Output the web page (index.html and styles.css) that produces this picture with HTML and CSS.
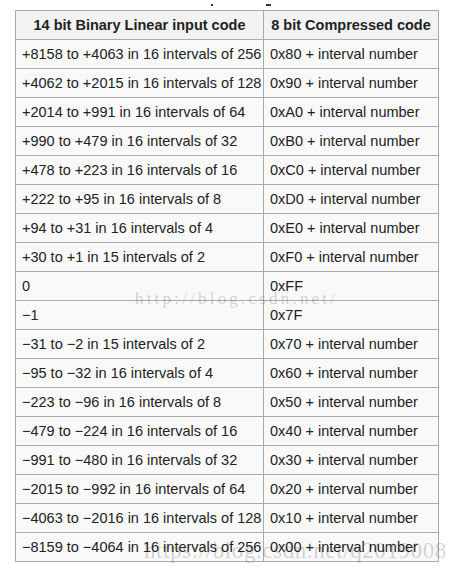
FILE: index.html
```html
<!DOCTYPE html>
<html>
<head>
<meta charset="utf-8">
<link rel="stylesheet" href="styles.css">
</head>
<body>
<div class="page">
  <div class="caption-remnant"><span class="dot"></span><span class="dash"></span></div>
  <table class="wikitable">
    <colgroup><col class="c1"><col class="c2"></colgroup>
    <thead>
      <tr><th>14 bit Binary Linear input code</th><th>8 bit Compressed code</th></tr>
    </thead>
    <tbody>
      <tr><td>+8158 to +4063 in 16 intervals of 256</td><td>0x80 + interval number</td></tr>
      <tr><td>+4062 to +2015 in 16 intervals of 128</td><td>0x90 + interval number</td></tr>
      <tr><td>+2014 to +991 in 16 intervals of 64</td><td>0xA0 + interval number</td></tr>
      <tr><td>+990 to +479 in 16 intervals of 32</td><td>0xB0 + interval number</td></tr>
      <tr><td>+478 to +223 in 16 intervals of 16</td><td>0xC0 + interval number</td></tr>
      <tr><td>+222 to +95 in 16 intervals of 8</td><td>0xD0 + interval number</td></tr>
      <tr><td>+94 to +31 in 16 intervals of 4</td><td>0xE0 + interval number</td></tr>
      <tr><td>+30 to +1 in 15 intervals of 2</td><td>0xF0 + interval number</td></tr>
      <tr><td>0</td><td>0xFF</td></tr>
      <tr><td>−1</td><td>0x7F</td></tr>
      <tr><td>−31 to −2 in 15 intervals of 2</td><td>0x70 + interval number</td></tr>
      <tr><td>−95 to −32 in 16 intervals of 4</td><td>0x60 + interval number</td></tr>
      <tr><td>−223 to −96 in 16 intervals of 8</td><td>0x50 + interval number</td></tr>
      <tr><td>−479 to −224 in 16 intervals of 16</td><td>0x40 + interval number</td></tr>
      <tr><td>−991 to −480 in 16 intervals of 32</td><td>0x30 + interval number</td></tr>
      <tr><td>−2015 to −992 in 16 intervals of 64</td><td>0x20 + interval number</td></tr>
      <tr><td>−4063 to −2016 in 16 intervals of 128</td><td>0x10 + interval number</td></tr>
      <tr><td>−8159 to −4064 in 16 intervals of 256</td><td>0x00 + interval number</td></tr>
    </tbody>
  </table>
  <div class="watermark wm1">http://blog.csdn.net/</div>
  <div class="watermark wm2">https://blog.csdn.net/q2019008</div>
</div>
</body>
</html>
```
FILE: styles.css
```css
html, body {
  margin: 0;
  padding: 0;
  background: #ffffff;
}
.page {
  position: relative;
  width: 458px;
  height: 577px;
  overflow: hidden;
  font-family: "Liberation Sans", Arial, sans-serif;
  color: #222222;
}
.caption-remnant {
  height: 10px;
  display: flex;
  align-items: flex-start;
  padding-left: 211px;
  box-sizing: border-box;
  padding-top: 4px;
}
.dot {
  width: 2px;
  height: 2px;
  background: #333;
}
.dash {
  width: 5px;
  height: 2px;
  background: #333;
  margin-left: 53px;
}
.wikitable {
  margin-left: 15px;
  border-collapse: collapse;
  table-layout: fixed;
  width: 423px;
  background: #f9f9f9;
  font-size: 14.5px;
}
.c1 { width: 248px; }
.c2 { width: 175px; }
.wikitable th,
.wikitable td {
  border: 1px solid #aaaaaa;
  padding: 0 6px;
  height: 28px;
  white-space: nowrap;
  overflow: hidden;
  vertical-align: middle;
}
.wikitable th {
  background: #f2f2f2;
  font-weight: bold;
  text-align: center;
}
.wikitable td {
  text-align: left;
}
.watermark {
  position: absolute;
  font-family: "Liberation Serif", "Times New Roman", serif;
  color: rgba(0, 0, 0, 0.18);
  white-space: nowrap;
  line-height: 1;
  pointer-events: none;
}
.wm1 {
  left: 135px;
  top: 290px;
  font-size: 17px;
  letter-spacing: 3.2px;
}
.wm2 {
  left: 144px;
  top: 539px;
  font-size: 23px;
  letter-spacing: 0.6px;
}
```
